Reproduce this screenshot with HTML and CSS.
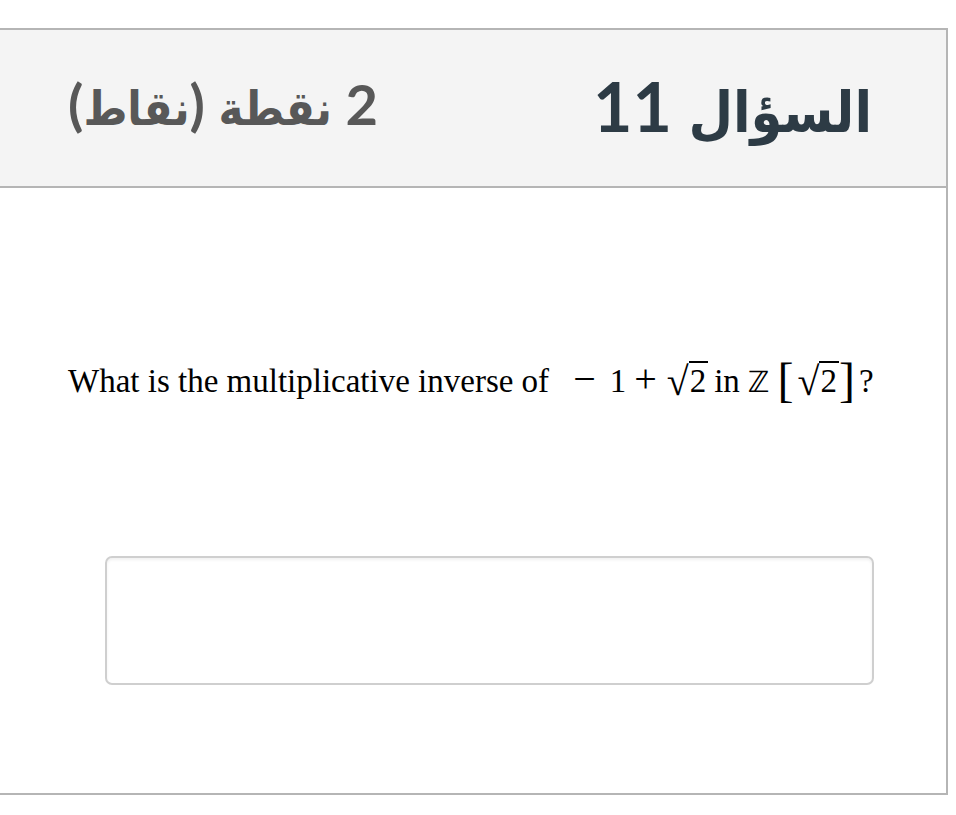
FILE: index.html
```html
<!DOCTYPE html>
<html lang="ar">
<head>
    <meta charset="UTF-8">
    <meta name="viewport" content="width=device-width, initial-scale=1.0">
    <title>السؤال 11</title>
    <link rel="stylesheet" href="styles.css">
</head>
<body>
    <div class="question">
        <div class="q-header" dir="rtl">
            <span class="q-name"><span class="ar">السؤال</span> 11</span>
            <span class="q-points">2 <span class="ar">نقطة</span> (<span class="ar">نقاط</span>)</span>
        </div>
        <div class="q-body" dir="ltr">
            <p class="q-text">What is the multiplicative inverse of<span class="math"><span class="op minus">&minus;</span><span class="num">1</span><span class="op">+</span><span class="sqrt"><span class="rad">&radic;</span><span class="under">2</span></span><span class="word">in</span><span class="zz">&#8484;</span><span class="br">[</span><span class="sqrt"><span class="rad">&radic;</span><span class="under">2</span></span><span class="br">]</span><span class="qm">?</span></span></p>
            <div class="answer">
                <input type="text" class="answer-input">
            </div>
        </div>
    </div>
</body>
</html>
```

FILE: styles.css
```css
body {
    margin: 0;
    background: #fff;
}
.question {
    margin: 28px 0 0 -2px;
    width: 946px;
    border: 2px solid #b5b5b5;
}
.q-header {
    display: flex;
    justify-content: space-between;
    align-items: center;
    height: 156px;
    padding: 0 74px 0 68px;
    background: #f4f4f4;
    border-bottom: 2px solid #b5b5b5;
    font-family: Lato, "DejaVu Sans", sans-serif;
    font-weight: bold;
    font-size: 68px;
}
.ar {
    font-family: "DejaVu Sans Condensed", "DejaVu Sans", sans-serif;
    font-stretch: condensed;
    font-size: 0.84em;
}
.q-name {
    color: #2d3b45;
    margin-top: -6px;
}
.q-points {
    color: #585858;
    font-size: 56px;
    margin-top: -10px;
}
.q-body {
    height: 605px;
    padding: 0 70px 0 68px;
}
.q-text {
    margin: 0;
    padding-top: 164px;
    font-family: "Liberation Serif", "Times New Roman", serif;
    font-size: 33px;
    color: #000;
    white-space: nowrap;
}
.math {
    margin-left: 24px;
}
.op {
    font-size: 40px;
    line-height: 1;
    margin-right: 10px;
}
.minus {
    margin-right: 14px;
}
.num {
    margin-right: 8px;
}
.sqrt {
    white-space: nowrap;
}
.rad {
    font-size: 40px;
    vertical-align: -3px;
}
.under {
    border-top: 2px solid #000;
    padding: 0 2px 0 1px;
}
.word {
    margin: 0 8px 0 6px;
}
.zz {
    font-family: "DejaVu Sans", sans-serif;
    font-size: 29px;
    margin-right: 8px;
}
.br {
    font-size: 48px;
    font-weight: 100;
    vertical-align: -4px;
    margin-right: 4px;
}
.qm {
    margin-left: 0;
}
.answer {
    padding: 149px 0 0 37px;
}
.answer-input {
    box-sizing: border-box;
    width: 769px;
    height: 129px;
    border: 2px solid #cfcfcf;
    border-radius: 7px;
    box-shadow: inset 0 2px 3px rgba(0, 0, 0, 0.06);
    background: #fff;
}
```
